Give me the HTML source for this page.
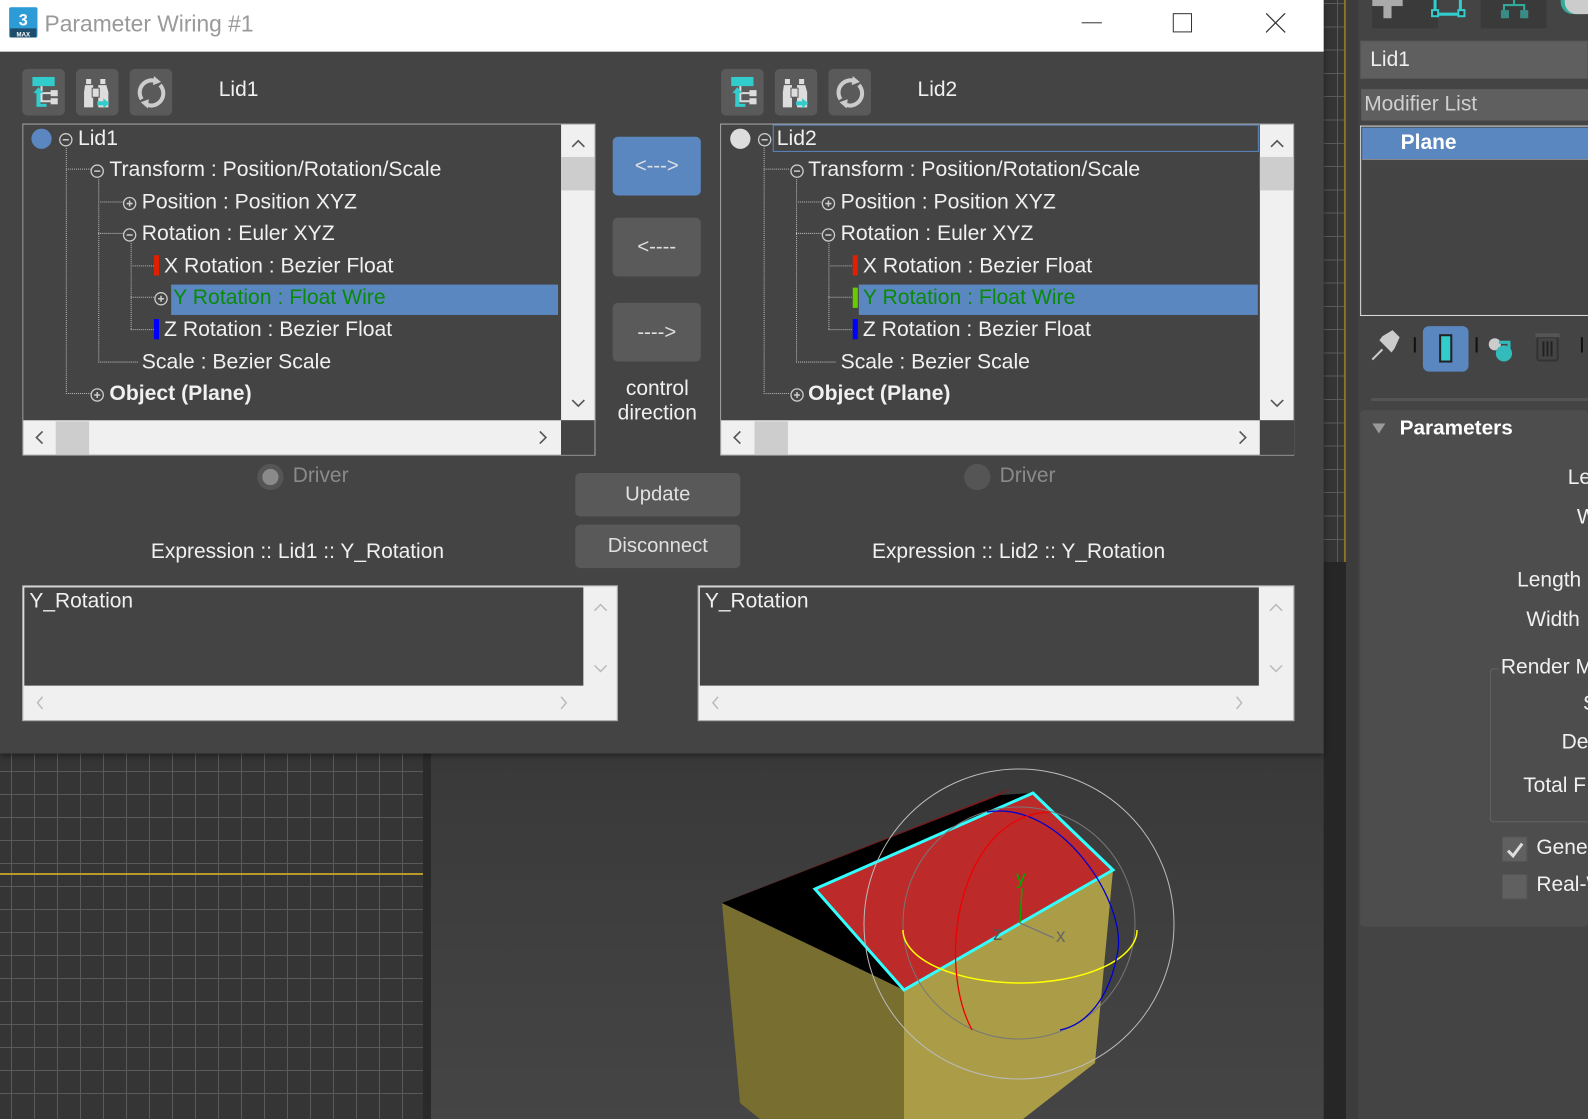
<!DOCTYPE html>
<html><head><meta charset="utf-8">
<style>
*{margin:0;padding:0;box-sizing:border-box}
html,body{width:1588px;height:1119px;overflow:hidden;background:#3a3a3a;font-family:"Liberation Sans",sans-serif}
#w{position:absolute;left:0;top:0;width:1568px;height:1105px;transform:scale(1.01276);transform-origin:0 0}
.a{position:absolute}
.tb{position:absolute;width:42px;height:46px;background:#5a5a5a;border-radius:5px}
.lbl{position:absolute;color:#f0f0f0;font-size:20.7px;white-space:nowrap}
.btn{position:absolute;border-radius:5px;color:#e0e0e0;font-size:20px;text-align:center}
.tree text{font-family:"Liberation Sans",sans-serif;font-size:20.9px;fill:#f0f0f0}
.dl{stroke:#bbb;stroke-width:1;stroke-dasharray:1 1;fill:none}
</style></head><body>
<div class="a" style="left:0;top:740px;width:424px;height:379px;background-color:#353535;background-image:repeating-linear-gradient(90deg,transparent 0 11px,#5a5a5a 11px 12px,transparent 12px 23px),repeating-linear-gradient(0deg,transparent 0 22px,#5a5a5a 22px 23px);background-position:0 -3px"></div>
<div class="a" style="left:0;top:873px;width:423px;height:2px;background:#b89a2a"></div>
<div class="a" style="left:423px;top:740px;width:8px;height:379px;background:#2a2a2a"></div>
<div class="a" style="left:431px;top:560px;width:916px;height:559px;background:linear-gradient(180deg,#2e2e2e,#3a3a3a 40%,#454545)"></div>
<svg class="a" style="left:0;top:0" width="1588" height="1119">
<polygon points="722,903 904,990 904,1119 760,1119 740,1103" fill="#786e30"/>
<polygon points="904,990 1113,870 1095,1063 1023,1119 904,1119" fill="#ab9d48"/>
<polygon points="722,903 1000,795 1033,793 904,990" fill="#000"/>
<polygon points="722,903 1013,788 1000,795 730,900" fill="#7a1a1a"/>
<polygon points="815,889 1033,793 1113,870 904,990" fill="#bc2a2a" stroke="#3ff" stroke-width="3"/>
<circle cx="1019" cy="924" r="155" fill="none" stroke="#bbb" stroke-width="1"/>
<circle cx="1019" cy="923" r="116" fill="none" stroke="#777" stroke-width="1"/>
<path d="M903,930 A117,53 0 0 0 1137,930" fill="none" stroke="#ff0" stroke-width="1.5"/>
<path d="M987,812 C1060,800 1125,900 1118,950 C1110,1000 1085,1025 1060,1030" fill="none" stroke="#0000d0" stroke-width="1.3"/>
<path d="M1050,812 C960,815 935,960 972,1030" fill="none" stroke="#e00" stroke-width="1.3"/>
<line x1="1020" y1="923" x2="1022" y2="888" stroke="#0a0" stroke-width="1.5"/>
<line x1="1020" y1="923" x2="1054" y2="938" stroke="#777" stroke-width="1.5"/>
<text x="1016" y="884" fill="#0a0" font-size="19" font-family="Liberation Sans">y</text>
<text x="1056" y="942" fill="#666" font-size="19" font-family="Liberation Sans">x</text>
<text x="993" y="940" fill="#555" font-size="19" font-family="Liberation Sans">z</text>
</svg>
<div id="w">
<div class="a" style="left:1307px;top:0;width:21px;height:555px;background-color:#353535;background-image:repeating-linear-gradient(0deg,transparent 0 22px,#5a5a5a 22px 23px),repeating-linear-gradient(90deg,transparent 0 13px,#5a5a5a 13px 14px,transparent 14px 22px)"></div>
<div class="a" style="left:1327px;top:0;width:2px;height:555px;background:#8a7424"></div>
<div class="a" style="left:1307px;top:555px;width:23px;height:550px;background:#262626"></div>
<div class="a" style="left:1329px;top:0;width:239px;height:1105px;background:#444"></div>
<div class="a" style="left:1329px;top:0;width:12px;height:1105px;background:#3c3c3c"></div>
<div class="a" style="left:1355px;top:0;width:65px;height:28px;background:#3a3a3a"></div>
<div class="a" style="left:1355px;top:0;width:30px;height:6px;background:#aaa"></div><div class="a" style="left:1366px;top:0;width:8px;height:18px;background:#aaa"></div>
<svg class="a" style="left:1412px;top:0" width="40" height="20"><path d="M5 0V14H30V0" fill="none" stroke="#3cc" stroke-width="3"/><rect x="2" y="10" width="6" height="6" fill="#333" stroke="#3cc" stroke-width="2"/><rect x="28" y="10" width="6" height="6" fill="#333" stroke="#3cc" stroke-width="2"/></svg>
<div class="a" style="left:1462px;top:0;width:65px;height:28px;background:#3a3a3a"></div>
<svg class="a" style="left:1480px;top:0" width="40" height="20"><path d="M15 0V5M5 12V5H25V12" stroke="#3a9" stroke-width="2" fill="none"/><rect x="2" y="10" width="8" height="8" fill="#3a8a86"/><rect x="21" y="10" width="8" height="8" fill="#3a8a86"/></svg>
<div class="a" style="left:1545px;top:0;width:23px;height:14px;border-radius:0 0 0 12px;background:#ccc;box-shadow:-4px 0 0 #3a9"></div>
<div class="a" style="left:1343px;top:40px;width:225px;height:38px;background:#5f5f5f;border:1px solid #555"><span class="lbl" style="left:9px;top:6px;color:#eee">Lid1</span></div>
<div class="a" style="left:1344px;top:88px;width:224px;height:31px;background:#5f5f5f"><span class="lbl" style="left:3px;top:3px;color:#cfcfcf">Modifier List</span></div>
<div class="a" style="left:1343px;top:124px;width:225px;height:188px;border:1.5px solid #ddd;border-right:none;background:#444"><div class="a" style="left:1px;top:1px;width:224px;height:32px;background:#5b87c0;border-bottom:1px solid #888"><span class="lbl" style="left:38px;top:3px;font-weight:bold;color:#fff">Plane</span></div></div>
<svg class="a" style="left:1350px;top:318px" width="218" height="50"><path d="M5 37L15 27" stroke="#ccc" stroke-width="2"/><path d="M12 18L24 30L27 26L32 15L25 8L15 14Z" fill="#ccc"/><line x1="47" y1="15" x2="47" y2="30" stroke="#111" stroke-width="2"/><rect x="55" y="4" width="45" height="45" rx="6" fill="#5b87c0"/><rect x="72" y="13" width="11" height="26" fill="#3cc" stroke="#222" stroke-width="2"/><line x1="108" y1="15" x2="108" y2="30" stroke="#111" stroke-width="2"/><circle cx="126" cy="22" r="6" fill="#ccc"/><circle cx="135" cy="31" r="8" fill="#3bb"/><path d="M130 20H140V33" stroke="#3bb" stroke-width="3" fill="none"/><rect x="168" y="15" width="20" height="23" rx="2" fill="#444" stroke="#333" stroke-width="2"/><rect x="166" y="11" width="24" height="4" fill="#555"/><path d="M174 19V34M178 19V34M182 19V34" stroke="#222" stroke-width="2"/><line x1="212" y1="15" x2="212" y2="30" stroke="#111" stroke-width="2"/></svg>
<div class="a" style="left:1354px;top:393px;width:214px;height:3px;background:#555"></div>
<div class="a" style="left:1343px;top:405px;width:225px;height:510px;background:#4d4d4d;border-radius:4px"></div>
<svg class="a" style="left:1355px;top:418px" width="14" height="12"><path d="M0 0H13L6.5 10Z" fill="#999"/></svg>
<span class="lbl" style="left:1382px;top:411px;font-weight:bold;color:#fff;font-size:20.5px">Parameters</span>
<span class="lbl" style="left:1548px;top:460px">Le</span>
<span class="lbl" style="left:1557px;top:499px">W</span>
<span class="lbl" style="left:1498px;top:561px">Length</span>
<span class="lbl" style="left:1507px;top:600px">Width</span>
<div class="a" style="left:1471px;top:660px;width:110px;height:152px;border:1px solid #666;border-radius:4px;border-right:none"></div>
<span class="lbl" style="left:1480px;top:647px;background:#4d4d4d;padding:0 2px">Render M</span>
<span class="lbl" style="left:1563px;top:683px">S</span>
<span class="lbl" style="left:1542px;top:721px">De</span>
<span class="lbl" style="left:1504px;top:764px">Total F</span>
<div class="a" style="left:1483px;top:826px;width:25px;height:25px;background:#606060;border:1px solid #555"><svg width="24" height="24"><path d="M5 13L10 18L19 6" stroke="#ddd" stroke-width="3" fill="none"/></svg></div>
<span class="lbl" style="left:1517px;top:825px">Gener</span>
<div class="a" style="left:1483px;top:863px;width:25px;height:25px;background:#606060;border:1px solid #555"></div>
<span class="lbl" style="left:1517px;top:862px">Real-W</span>

<div class="a" style="left:0;top:0;width:1307px;height:744px;background:#444;box-shadow:0 2px 6px rgba(0,0,0,.5)"></div>
<div class="a" style="left:0;top:0;width:1307px;height:51px;background:#fff"></div>
<svg class="a" style="left:8px;top:7px" width="30" height="31"><rect x="1" y="0" width="28" height="30" rx="2" fill="#2d9bd6"/><rect x="2" y="21" width="26" height="9" fill="#1e4c6a"/><text x="15" y="18" fill="#fff" font-size="16" font-weight="bold" text-anchor="middle" font-family="Liberation Sans">3</text><text x="15" y="29" fill="#fff" font-size="6" font-weight="bold" text-anchor="middle" font-family="Liberation Sans">MAX</text></svg>
<span class="lbl" style="left:44px;top:11px;color:#999;font-size:22.5px">Parameter Wiring #1</span>
<div class="a" style="left:1068px;top:22px;width:20px;height:1px;background:#333"></div>
<div class="a" style="left:1158px;top:13px;width:19px;height:19px;border:1px solid #333"></div>
<svg class="a" style="left:1250px;top:13px" width="20" height="20"><path d="M0 0L19 19M19 0L0 19" stroke="#333" stroke-width="1.2"/></svg>

<div class="tb" style="left:22px;top:68px"></div><div class="tb" style="left:75px;top:68px"></div><div class="tb" style="left:128px;top:68px"></div>
<div class="tb" style="left:712px;top:68px"></div><div class="tb" style="left:765px;top:68px"></div><div class="tb" style="left:818px;top:68px"></div>
<svg class="a" style="left:0;top:0" width="900" height="120">
<g id="ic"><rect x="32" y="76" width="22" height="9" fill="#3cc"/><path d="M41 85V100H52M41 92H52" stroke="#ddd" stroke-width="2" fill="none"/><rect x="50" y="89" width="7" height="6" fill="#ddd"/><rect x="50" y="97" width="7" height="6" fill="#ddd"/><path d="M33 92L38 86L43 92H40V105H36V92Z" fill="#3cc"/><path d="M36 104H46" stroke="#3cc" stroke-width="3"/>
<rect x="85" y="78" width="5" height="5" fill="#ddd"/><rect x="99" y="78" width="5" height="5" fill="#ddd"/>
<path d="M84 84h8v22h-9v-15z" fill="#ddd"/><path d="M97 84h8l2 7v15h-10z" fill="#ddd"/><rect x="91" y="87" width="7" height="9" fill="#ddd" stroke="#5a5a5a" stroke-width="1"/>
<path d="M96 100h6v-3l6 5-6 5v-3h-6z" fill="#3cc"/>
<path d="M154 80A12 12 0 0 0 140 98M144 103A12 12 0 0 0 158 84" stroke="#ccc" stroke-width="4" fill="none"/><path d="M152 75L159 81L151 84Z" fill="#ccc"/><path d="M146 107L139 101L147 98Z" fill="#ccc"/></g>
<use href="#ic" x="690"/>
</svg>
<span class="lbl" style="left:216px;top:77px">Lid1</span>
<span class="lbl" style="left:906px;top:77px">Lid2</span>

<svg class="a tree" style="left:22px;top:122px" width="566" height="328">
<rect x="0.5" y="0.5" width="565" height="327" fill="#444" stroke="#aaa"/>
<rect x="147" y="159" width="382" height="30" fill="#5b87c0"/>
<g class="dl"><path d="M43.5 24V266M43 45H68M43 266.5H68M75.5 55V235M75 77.5H100M75 108.5H100M75 235.5H114M107.5 118V203M107 140.5H130M107 171.5H131M107 203.5H130"/></g>
<circle cx="19" cy="15" r="10" fill="#5b87c0"/>
<g fill="#444" stroke="#ccc" stroke-width="1.3"><circle cx="43" cy="16" r="6"/><circle cx="74" cy="47" r="6"/><circle cx="106" cy="79" r="6"/><circle cx="106" cy="110" r="6"/><circle cx="137" cy="173" r="6"/><circle cx="74" cy="268" r="6"/></g>
<g stroke="#ccc" stroke-width="1.5"><path d="M40 16h6M71 47h6M103 79h6M103 110h6M134 173h6M71 268h6M106 76v6M137 170v6M74 265v6"/></g>
<rect x="130" y="130" width="5" height="20" fill="#e02000"/><rect x="130" y="193" width="5" height="20" fill="#0000ff"/>
<text x="55" y="21">Lid1</text><text x="86" y="52">Transform : Position/Rotation/Scale</text><text x="118" y="84">Position : Position XYZ</text><text x="118" y="115">Rotation : Euler XYZ</text><text x="140" y="147">X Rotation : Bezier Float</text><text x="149" y="178" style="fill:#0a8a0a">Y Rotation : Float Wire</text><text x="140" y="210">Z Rotation : Bezier Float</text><text x="118" y="242">Scale : Bezier Scale</text><text x="86" y="273" font-weight="bold">Object (Plane)</text>
<rect x="532" y="1" width="33" height="292" fill="#f0f0f0"/><rect x="532" y="33" width="33" height="33" fill="#cdcdcd"/>
<rect x="1" y="293" width="531" height="34" fill="#f0f0f0"/><rect x="33" y="294" width="33" height="33" fill="#cdcdcd"/><rect x="532" y="293" width="33" height="34" fill="#444"/>
<g stroke="#555" stroke-width="1.6" fill="none"><path d="M543 23L549 17L555 23M543 273L549 279L555 273M20 304L14 310L20 316M511 304L517 310L511 316"/></g>
</svg>
<svg class="a tree" style="left:711px;top:122px" width="567" height="328">
<rect x="0.5" y="0.5" width="566" height="327" fill="#444" stroke="#aaa"/>
<rect x="137" y="159" width="394" height="30" fill="#5b87c0"/>
<rect x="52.5" y="1.5" width="479" height="26" fill="none" stroke="#5b87c0"/>
<g class="dl"><path d="M43.5 24V266M43 45H68M43 266.5H68M75.5 55V235M75 77.5H100M75 108.5H100M75 235.5H114M107.5 118V203M107 140.5H130M107 171.5H130M107 203.5H130"/></g>
<circle cx="20" cy="15" r="10" fill="#ddd"/>
<g fill="#444" stroke="#ccc" stroke-width="1.3"><circle cx="44" cy="16" r="6"/><circle cx="76" cy="47" r="6"/><circle cx="107" cy="79" r="6"/><circle cx="107" cy="110" r="6"/><circle cx="76" cy="268" r="6"/></g>
<g stroke="#ccc" stroke-width="1.5"><path d="M41 16h6M73 47h6M104 79h6M104 110h6M73 268h6M107 76v6M76 265v6"/></g>
<rect x="131" y="130" width="5" height="20" fill="#e02000"/><rect x="131" y="162" width="5" height="20" fill="#6c0"/><rect x="131" y="193" width="5" height="20" fill="#0000ff"/>
<text x="56" y="21">Lid2</text><text x="87" y="52">Transform : Position/Rotation/Scale</text><text x="119" y="84">Position : Position XYZ</text><text x="119" y="115">Rotation : Euler XYZ</text><text x="141" y="147">X Rotation : Bezier Float</text><text x="141" y="178" style="fill:#0a8a0a">Y Rotation : Float Wire</text><text x="141" y="210">Z Rotation : Bezier Float</text><text x="119" y="242">Scale : Bezier Scale</text><text x="87" y="273" font-weight="bold">Object (Plane)</text>
<rect x="533" y="1" width="33" height="292" fill="#f0f0f0"/><rect x="533" y="33" width="33" height="33" fill="#cdcdcd"/>
<rect x="1" y="293" width="532" height="34" fill="#f0f0f0"/><rect x="34" y="294" width="33" height="33" fill="#cdcdcd"/><rect x="533" y="293" width="34" height="34" fill="#444"/>
<g stroke="#555" stroke-width="1.6" fill="none"><path d="M544 23L550 17L556 23M544 273L550 279L556 273M20 304L14 310L20 316M513 304L519 310L513 316"/></g>
</svg>

<div class="btn" style="left:605px;top:135px;width:87px;height:58px;background:#5b87c0;line-height:58px">&lt;---&gt;</div>
<div class="btn" style="left:605px;top:215px;width:87px;height:58px;background:#5a5a5a;line-height:58px">&lt;----</div>
<div class="btn" style="left:605px;top:299px;width:87px;height:58px;background:#5a5a5a;line-height:58px">----&gt;</div>
<div class="a" style="left:590px;top:372px;width:118px;text-align:center;color:#f0f0f0;font-size:20.7px;line-height:24px">control<br>direction</div>

<div class="a" style="left:254px;top:458px;width:26px;height:26px;border-radius:50%;background:#555"></div><div class="a" style="left:259px;top:463px;width:16px;height:16px;border-radius:50%;background:#8a8a8a"></div>
<span class="lbl" style="left:289px;top:458px;color:#8a8a8a">Driver</span>
<div class="a" style="left:952px;top:458px;width:26px;height:26px;border-radius:50%;background:#555"></div>
<span class="lbl" style="left:987px;top:458px;color:#8a8a8a">Driver</span>
<div class="btn" style="left:568px;top:467px;width:163px;height:43px;background:#595959;line-height:43px">Update</div>
<div class="btn" style="left:568px;top:518px;width:163px;height:43px;background:#595959;line-height:43px">Disconnect</div>
<span class="lbl" style="left:149px;top:533px">Expression :: Lid1 :: Y_Rotation</span>
<span class="lbl" style="left:861px;top:533px">Expression :: Lid2 :: Y_Rotation</span>

<div class="a" style="left:22px;top:578px;width:588px;height:134px;background:#f0f0f0;border:1px solid #aaa"><div class="a" style="left:1px;top:1px;width:552px;height:97px;background:#444"></div><span class="lbl" style="left:6px;top:3px">Y_Rotation</span>
<svg class="a" style="left:0;top:0" width="588" height="134"><g stroke="#bbb" stroke-width="1.5" fill="none"><path d="M564 24L570 18L576 24M564 78L570 84L576 78M19 109L14 115L19 121M531 109L536 115L531 121"/></g></svg></div>
<div class="a" style="left:689px;top:578px;width:589px;height:134px;background:#f0f0f0;border:1px solid #aaa"><div class="a" style="left:1px;top:1px;width:552px;height:97px;background:#444"></div><span class="lbl" style="left:6px;top:3px">Y_Rotation</span>
<svg class="a" style="left:0;top:0" width="588" height="134"><g stroke="#bbb" stroke-width="1.5" fill="none"><path d="M564 24L570 18L576 24M564 78L570 84L576 78M19 109L14 115L19 121M531 109L536 115L531 121"/></g></svg></div>
</div>
</body></html>
